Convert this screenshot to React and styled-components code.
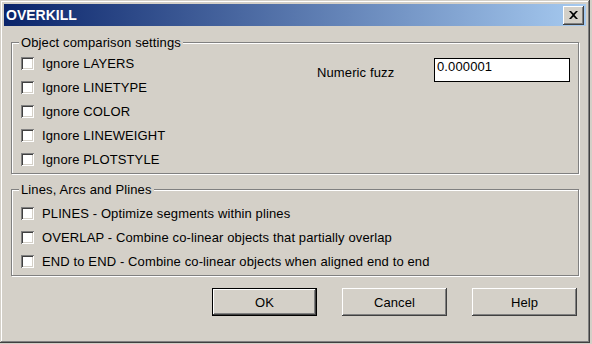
import React from "react";
import styled, { createGlobalStyle } from "styled-components";

const GlobalStyle = createGlobalStyle`
  html, body {
    margin: 0;
    padding: 0;
    background: #d4d0c8;
  }
  body {
    font-family: "Liberation Sans", Arial, sans-serif;
    font-size: 13px;
    letter-spacing: 0.12px;
    color: #000;
  }
`;

const Window = styled.div`
  box-sizing: border-box;
  width: 590px;
  height: 343px;
  padding: 4px;
  background: #d4d0c8;
  box-shadow: inset -1px -1px #404040, inset 1px 1px #d4d0c8,
    inset -2px -2px #808080, inset 2px 2px #fff;
  display: flex;
  flex-direction: column;
`;

const TitleBar = styled.div`
  height: 22px;
  display: flex;
  align-items: center;
  justify-content: space-between;
  padding: 0 2px;
  background: linear-gradient(to right, #0a246a, #a6caf0);
`;

const Title = styled.span`
  color: #fff;
  font-weight: bold;
  font-size: 14px;
  letter-spacing: 0;
`;

const CloseButton = styled.div`
  box-sizing: border-box;
  width: 21px;
  height: 19px;
  display: flex;
  align-items: center;
  justify-content: center;
  background: #d4d0c8;
  box-shadow: inset -1px -1px #404040, inset 1px 1px #fff,
    inset -2px -2px #808080, inset 2px 2px #d4d0c8;
`;

const Body = styled.div`
  display: flex;
  flex-direction: column;
  padding: 16px 7px 0 7px;
`;

const Group = styled.div`
  display: flex;
  flex-direction: column;
  border: 1px solid #808080;
  box-shadow: inset 1px 1px #fff, 1px 1px #fff;
  margin-top: ${({ $gap }) => $gap || 0}px;
  padding: 0 8px 2px 9px;
`;

const Caption = styled.span`
  align-self: flex-start;
  margin: -8px 0 0 -2px;
  padding: 0 2px;
  line-height: 15px;
  background: #d4d0c8;
`;

const GroupContent = styled.div`
  display: flex;
  justify-content: space-between;
  padding-top: ${({ $top }) => $top}px;
`;

const Checks = styled.div`
  display: flex;
  flex-direction: column;
`;

const Row = styled.label`
  display: flex;
  align-items: center;
  height: 24px;
  gap: 8px;
  white-space: nowrap;
`;

const Box = styled.span`
  box-sizing: border-box;
  width: 13px;
  height: 13px;
  background: #fff;
  box-shadow: inset 1px 1px #808080, inset -1px -1px #fff,
    inset 2px 2px #404040, inset -2px -2px #d4d0c8;
`;

const FuzzRow = styled.div`
  display: flex;
  align-items: center;
  align-self: flex-start;
  margin-top: 7px;
`;

const FuzzLabel = styled.span`
  width: 117px;
  padding-top: 4px;
`;

const Field = styled.input`
  box-sizing: border-box;
  width: 136px;
  height: 24px;
  margin: 0;
  border: 1px solid #000;
  padding: 0 2px 7px;
  font-family: "Liberation Sans", Arial, sans-serif;
  font-size: 13px;
  letter-spacing: 0.12px;
  color: #000;
  background: #fff;
  outline: none;
`;

const ButtonRow = styled.div`
  display: flex;
  justify-content: flex-end;
  gap: 25px;
  margin-top: 12px;
  padding-right: 2px;
`;

const Button = styled.div`
  box-sizing: border-box;
  width: 105px;
  height: 28px;
  display: flex;
  align-items: center;
  justify-content: center;
  background: #d4d0c8;
  border: ${({ $default }) => ($default ? "1px solid #000" : "0")};
  box-shadow: inset -1px -1px #404040, inset 1px 1px #fff,
    inset -2px -2px #808080, inset 2px 2px #d4d0c8;
`;

const CloseIcon = () => (
  <svg width="9" height="8" viewBox="0 0 9 8">
    <path
      d="M0 0h2l2.5 2.5L7 0h2L5.5 4 9 8H7L4.5 5.5 2 8H0l3.5-4z"
      fill="#000"
    />
  </svg>
);

const objectOptions = [
  "Ignore LAYERS",
  "Ignore LINETYPE",
  "Ignore COLOR",
  "Ignore LINEWEIGHT",
  "Ignore PLOTSTYLE",
];

const lineOptions = [
  "PLINES - Optimize segments within plines",
  "OVERLAP - Combine co-linear objects that partially overlap",
  "END to END - Combine co-linear objects when aligned end to end",
];

export default function App() {
  return (
    <>
      <GlobalStyle />
      <Window>
        <TitleBar>
          <Title>OVERKILL</Title>
          <CloseButton>
            <CloseIcon />
          </CloseButton>
        </TitleBar>
        <Body>
          <Group>
            <Caption>Object comparison settings</Caption>
            <GroupContent $top={1}>
              <Checks>
                {objectOptions.map((t) => (
                  <Row key={t}>
                    <Box />
                    {t}
                  </Row>
                ))}
              </Checks>
              <FuzzRow>
                <FuzzLabel>Numeric fuzz</FuzzLabel>
                <Field defaultValue="0.000001" readOnly />
              </FuzzRow>
            </GroupContent>
          </Group>
          <Group $gap={15}>
            <Caption>Lines, Arcs and Plines</Caption>
            <GroupContent $top={4}>
              <Checks>
                {lineOptions.map((t) => (
                  <Row key={t}>
                    <Box />
                    {t}
                  </Row>
                ))}
              </Checks>
            </GroupContent>
          </Group>
          <ButtonRow>
            <Button $default>OK</Button>
            <Button>Cancel</Button>
            <Button>Help</Button>
          </ButtonRow>
        </Body>
      </Window>
    </>
  );
}
